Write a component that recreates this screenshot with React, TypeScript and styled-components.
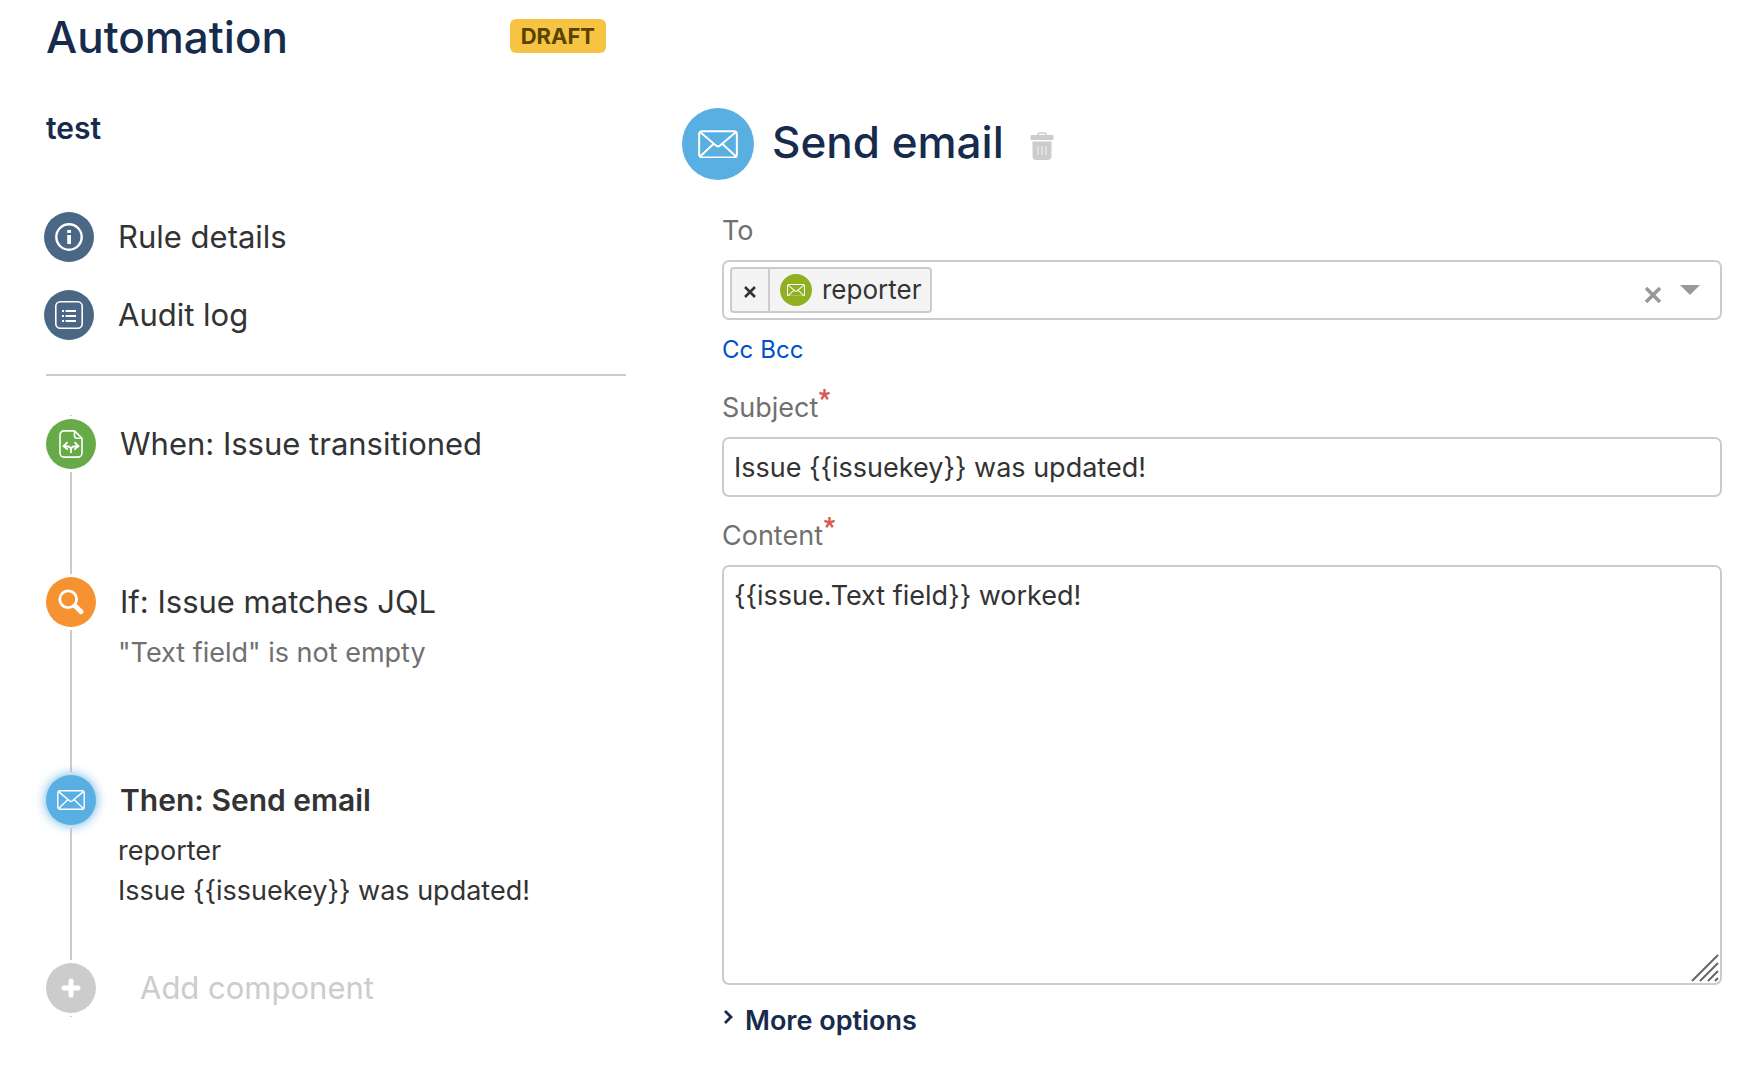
import React from "react";
import styled, { createGlobalStyle } from "styled-components";

const GlobalStyle = createGlobalStyle`
  *, *::before, *::after { box-sizing: border-box; }
  body {
    margin: 0;
    background: #fff;
    color: #333;
    font-family: Inter, "Liberation Sans", sans-serif;
    font-size: 27px;
    line-height: 40px;
  }
  button, input, textarea { font: inherit; color: inherit; }
  h1, h2, h3, p, ul, ol { margin: 0; padding: 0; }
`;

const Page = styled.div`
  display: grid;
  grid-template-columns: 580px minmax(0, 1fr);
  column-gap: 56px;
  padding: 0 36px 20px 46px;
`;

const Sidebar = styled.aside`
  display: flex;
  flex-direction: column;
`;

const SidebarHeader = styled.header`
  display: flex;
  align-items: center;
  justify-content: space-between;
  height: 72px;
  padding-right: 20px;
`;

const Title = styled.h1`
  padding-top: 2px;
  color: #172b4d;
  font-size: 44px;
  line-height: 56px;
  font-weight: 500;
`;

const Lozenge = styled.span`
  padding: 0 11px;
  border-radius: 6px;
  background: #f6c342;
  color: #594300;
  font-size: 22px;
  line-height: 34px;
  font-weight: 700;
  text-transform: uppercase;
`;

const RuleName = styled.h2`
  margin-top: 36px;
  color: #172b4d;
  font-size: 30px;
  line-height: 40px;
  font-weight: 600;
`;

const RuleLinks = styled.ul`
  display: flex;
  flex-direction: column;
  gap: 28px;
  margin: 64px 0 0 -2px;
  list-style: none;
`;

const RuleLink = styled.a`
  display: flex;
  align-items: center;
  gap: 24px;
  color: #333;
  font-size: 31px;
  text-decoration: none;
`;

const Divider = styled.hr`
  width: 100%;
  height: 2px;
  margin: 34px 0 39px;
  border: 0;
  background: #ccc;
`;

const Disc = styled.span<{ $color: string; $size?: number; $glow?: boolean }>`
  display: flex;
  flex: none;
  align-items: center;
  justify-content: center;
  width: ${(p) => p.$size ?? 50}px;
  height: ${(p) => p.$size ?? 50}px;
  border-radius: 50%;
  background: ${(p) => p.$color};
  box-shadow: ${(p) => (p.$glow ? "0 0 12px #59afe1" : "none")};
`;

const Timeline = styled.ol`
  list-style: none;
`;

const Step = styled.li<{ $height: number }>`
  display: flex;
  gap: 22px;
  min-height: ${(p) => p.$height}px;
`;

const Rail = styled.div`
  display: flex;
  flex-direction: column;
  align-items: center;
  gap: 3px;
`;

const RailLine = styled.span`
  flex: 1;
  width: 2px;
  margin-bottom: 3px;
  background: #ccc;
`;

const RailEnd = styled.span`
  display: block;
  width: 2px;
  height: 1px;
  margin: 0 24px 3px;
  background: #ccc;
`;

const StepTitle = styled.h3<{ $active?: boolean }>`
  margin-bottom: 6px;
  padding-left: 2px;
  font-size: ${(p) => (p.$active ? 30 : 31)}px;
  line-height: 50px;
  font-weight: ${(p) => (p.$active ? 600 : 400)};
`;

const StepText = styled.p<{ $muted?: boolean }>`
  color: ${(p) => (p.$muted ? "#707070" : "#333")};
`;

const AddButton = styled.button`
  display: flex;
  align-items: center;
  gap: 44px;
  margin-bottom: 3px;
  padding: 0;
  border: 0;
  background: none;
  color: #ccc;
  font-size: 31px;
`;

const Editor = styled.main`
  padding-top: 108px;
`;

const EditorHeader = styled.header`
  display: flex;
  align-items: center;
  gap: 18px;

  ${Title} {
    padding: 0 0 4px;
  }
`;

const IconButton = styled.button`
  display: flex;
  margin-left: 8px;
  padding: 4px 0 0;
  border: 0;
  background: none;
`;

const Form = styled.form`
  display: flex;
  flex-direction: column;
  padding: 31px 0 0 40px;
`;

const Label = styled.label`
  display: flex;
  margin-bottom: 9px;
  color: #707070;
`;

const Required = styled.span`
  display: flex;
  padding: 1px 0 0 1px;
  color: #d04437;
`;

const fieldBox = `
  width: 100%;
  border: 2px solid #ccc;
  border-radius: 7px;
  background: #fff;
`;

const Picker = styled.div`
  ${fieldBox}
  display: flex;
  align-items: center;
  height: 60px;
  padding: 0 20px 0 6px;
`;

const Token = styled.span`
  display: flex;
  height: 46px;
  border: 2px solid #ccc;
  border-radius: 4px;
  background: #f4f4f4;
`;

const TokenRemove = styled.button`
  display: flex;
  align-items: center;
  justify-content: center;
  width: 38px;
  padding: 4px 0 0;
  border: 0;
  border-right: 2px solid #ccc;
  background: none;
`;

const TokenLabel = styled.span`
  display: flex;
  align-items: center;
  gap: 10px;
  padding: 0 9px 0 10px;
  font-size: 26px;
`;

const PickerInput = styled.input`
  flex: 1;
  min-width: 0;
  border: 0;
  outline: 0;
  background: none;
`;

const PickerButton = styled.button<{ $drop?: number }>`
  display: flex;
  margin-left: 19px;
  padding: ${(p) => p.$drop ?? 0}px 0 0;
  border: 0;
  background: none;
`;

const CopyLinks = styled.p`
  display: flex;
  gap: 7px;
  margin: 10px 0 18px;
  font-size: 24px;
`;

const CopyLink = styled.a`
  color: #0052cc;
  text-decoration: none;
`;

const TextInput = styled.input`
  ${fieldBox}
  height: 60px;
  margin-bottom: 19px;
  padding: 0 10px;
  outline: 0;
`;

const TextAreaWrap = styled.div`
  position: relative;
  display: flex;
`;

const TextArea = styled.textarea`
  ${fieldBox}
  height: 420px;
  padding: 9px 10px;
  resize: none;
  outline: 0;
`;

const ResizeGrip = styled.svg`
  position: absolute;
  right: 3px;
  bottom: 3px;
  pointer-events: none;
`;

const MoreOptions = styled.button`
  display: flex;
  align-items: center;
  align-self: flex-start;
  gap: 12px;
  margin-top: 16px;
  padding: 0 0 0 2px;
  border: 0;
  background: none;
  color: #172b4d;
  font-weight: 600;
`;

const ChevronSlot = styled.span`
  display: flex;
  padding-bottom: 8px;
`;

const MailIcon = ({ width, stroke = 1.4 }: { width: number; stroke?: number }) => (
  <svg width={width} height={(width * 20) / 28} viewBox="0 0 28 20" fill="none" stroke="#fff" strokeWidth={stroke} strokeLinejoin="round" aria-hidden="true">
    <rect x="0.8" y="0.8" width="26.4" height="18.4" rx="2" />
    <path d="M1.6 1.6 12.8 11q1.2 1 2.4 0L26.4 1.6M1.6 18.4 11 9.6M26.4 18.4 17 9.6" />
  </svg>
);

const InfoIcon = () => (
  <svg width="28" height="28" viewBox="0 0 28 28" aria-hidden="true">
    <circle cx="14" cy="14" r="12.7" fill="none" stroke="#fff" strokeWidth="2.4" />
    <path d="M12.2 7h3.8v3h-3.8zM12.2 12h3.8v9h-3.8z" fill="#fff" />
  </svg>
);

const ListIcon = () => (
  <svg width="28" height="28" viewBox="0 0 28 28" fill="none" stroke="#fff" aria-hidden="true">
    <rect x="0.8" y="0.8" width="26.4" height="26.4" rx="4.5" strokeWidth="1.6" />
    <path d="M7 10h2M7 15h2M7 20h2M10.5 10H21M10.5 15H21M10.5 20H21" strokeWidth="2" />
  </svg>
);

const TransitionIcon = () => (
  <svg width="24" height="28" viewBox="0 0 24 28" fill="none" stroke="#fff" aria-hidden="true">
    <path d="M15.5.9H5A4 4 0 0 0 1 4.9v18.2a4 4 0 0 0 4 4h14a4 4 0 0 0 4-4V8.2zM15.5.9V6q0 2.2 2.2 2.2H23" strokeWidth="1.6" strokeLinejoin="round" />
    <path d="M12 23v-3.5q0-2-2-2.8L5.5 16M12 19.5q0-2 2-2.8l4.5-.7" strokeWidth="1.9" />
    <path d="m8.5 12.2-4 3.9 4.3 3.5M15.5 12.2l4 3.9-4.3 3.5" strokeWidth="1.8" />
  </svg>
);

const SearchIcon = () => (
  <svg width="26" height="26" viewBox="0 0 26 26" fill="none" stroke="#fff" strokeLinecap="round" aria-hidden="true">
    <circle cx="10.2" cy="10.2" r="8.4" strokeWidth="2.8" />
    <path d="m17 16.7 6 6" strokeWidth="4.8" />
  </svg>
);

const PlusIcon = () => (
  <svg width="20" height="20" viewBox="0 0 20 20" stroke="#fff" strokeWidth="5" strokeLinecap="round" aria-hidden="true">
    <path d="M10 3v14M3 10h14" />
  </svg>
);

const TrashIcon = () => (
  <svg width="24" height="28" viewBox="0 0 24 28" aria-hidden="true">
    <path d="M8 4V2.5q0-1.500 1.500-1.500h5q1.500 0 1.500 1.500V4" fill="none" stroke="#ccc" strokeWidth="1.6" />
    <rect x="0.5" y="3" width="23" height="5" rx="1" fill="#ccc" />
    <path d="M2.5 9.500h19V24q0 4-4 4h-11q-4 0-4-4z" fill="#ccc" />
    <path d="M8 14v9M12 14v9M16 14v9" stroke="#f2ece2" strokeWidth="1.2" />
  </svg>
);

const CrossIcon = ({ size, color, stroke }: { size: number; color: string; stroke: number }) => (
  <svg width={size} height={size} viewBox={`0 0 ${size} ${size}`} stroke={color} strokeWidth={stroke} aria-hidden="true">
    <path d={`M1 1 ${size - 1} ${size - 1}M${size - 1} 1 1 ${size - 1}`} />
  </svg>
);

const CaretIcon = () => (
  <svg width="20" height="10" viewBox="0 0 20 10" aria-hidden="true">
    <path d="M0 0h20L10 10z" fill="#999" />
  </svg>
);

const ChevronIcon = () => (
  <svg width="9" height="14" viewBox="0 0 9 14" fill="none" stroke="#172b4d" strokeWidth="2.8" aria-hidden="true">
    <path d="m1 1 6 6-6 6" />
  </svg>
);

const AsteriskIcon = () => (
  <svg width="11" height="11" viewBox="0 0 10 10" stroke="currentColor" strokeWidth="2.2" opacity="0.85" aria-hidden="true">
    <path d="M5 5V0M5 5 .3 3.500M5 5l4.700-1.500M5 5 2 9.300M5 5l3 4.300" />
  </svg>
);

export default function App() {
  return (
    <>
      <GlobalStyle />
      <Page>
        <Sidebar>
          <SidebarHeader>
            <Title>Automation</Title>
            <Lozenge>Draft</Lozenge>
          </SidebarHeader>
          <RuleName>test</RuleName>
          <RuleLinks>
            <li>
              <RuleLink href="#details">
                <Disc $color="#4a6785"><InfoIcon /></Disc>
                Rule details
              </RuleLink>
            </li>
            <li>
              <RuleLink href="#audit">
                <Disc $color="#4a6785"><ListIcon /></Disc>
                Audit log
              </RuleLink>
            </li>
          </RuleLinks>
          <Divider />
          <RailEnd />
          <Timeline>
            <Step $height={158}>
              <Rail>
                <Disc $color="#67ab49"><TransitionIcon /></Disc>
                <RailLine />
              </Rail>
              <StepTitle>When: Issue transitioned</StepTitle>
            </Step>
            <Step $height={198}>
              <Rail>
                <Disc $color="#f79232"><SearchIcon /></Disc>
                <RailLine />
              </Rail>
              <div>
                <StepTitle>If: Issue matches JQL</StepTitle>
                <StepText $muted>"Text field" is not empty</StepText>
              </div>
            </Step>
            <Step $height={188}>
              <Rail>
                <Disc $color="#59afe1" $glow><MailIcon width={28} /></Disc>
                <RailLine />
              </Rail>
              <div>
                <StepTitle $active>Then: Send email</StepTitle>
                <StepText>reporter</StepText>
                <StepText>{"Issue {{issuekey}} was updated!"}</StepText>
              </div>
            </Step>
          </Timeline>
          <AddButton type="button">
            <Disc $color="#ccc"><PlusIcon /></Disc>
            Add component
          </AddButton>
          <RailEnd />
        </Sidebar>
        <Editor>
          <EditorHeader>
            <Disc $color="#59afe1" $size={72}><MailIcon width={40} /></Disc>
            <Title as="h2">Send email</Title>
            <IconButton type="button" aria-label="Delete"><TrashIcon /></IconButton>
          </EditorHeader>
          <Form onSubmit={(e) => e.preventDefault()}>
            <Label htmlFor="to">To</Label>
            <Picker>
              <Token>
                <TokenRemove type="button" aria-label="Remove reporter">
                  <CrossIcon size={12} color="#333" stroke={2.6} />
                </TokenRemove>
                <TokenLabel>
                  <Disc $color="#8eb021" $size={32}><MailIcon width={18} stroke={1.6} /></Disc>
                  reporter
                </TokenLabel>
              </Token>
              <PickerInput id="to" />
              <PickerButton type="button" aria-label="Clear all" $drop={10}>
                <CrossIcon size={16} color="#999" stroke={3.6} />
              </PickerButton>
              <PickerButton type="button" aria-label="Show choices"><CaretIcon /></PickerButton>
            </Picker>
            <CopyLinks>
              <CopyLink href="#cc">Cc</CopyLink>
              <CopyLink href="#bcc">Bcc</CopyLink>
            </CopyLinks>
            <Label htmlFor="subject">
              Subject<Required><AsteriskIcon /></Required>
            </Label>
            <TextInput id="subject" defaultValue="Issue {{issuekey}} was updated!" />
            <Label htmlFor="content">
              Content<Required><AsteriskIcon /></Required>
            </Label>
            <TextAreaWrap>
              <TextArea id="content" defaultValue="{{issue.Text field}} worked!" />
              <ResizeGrip width="28" height="28" viewBox="0 0 28 28" stroke="#666" strokeWidth="2" aria-hidden="true">
                <path d="M1 27 27 1M9 27 27 9M17 27 27 17M24 27l3-3" />
              </ResizeGrip>
            </TextAreaWrap>
            <MoreOptions type="button">
              <ChevronSlot><ChevronIcon /></ChevronSlot>
              More options
            </MoreOptions>
          </Form>
        </Editor>
      </Page>
    </>
  );
}
